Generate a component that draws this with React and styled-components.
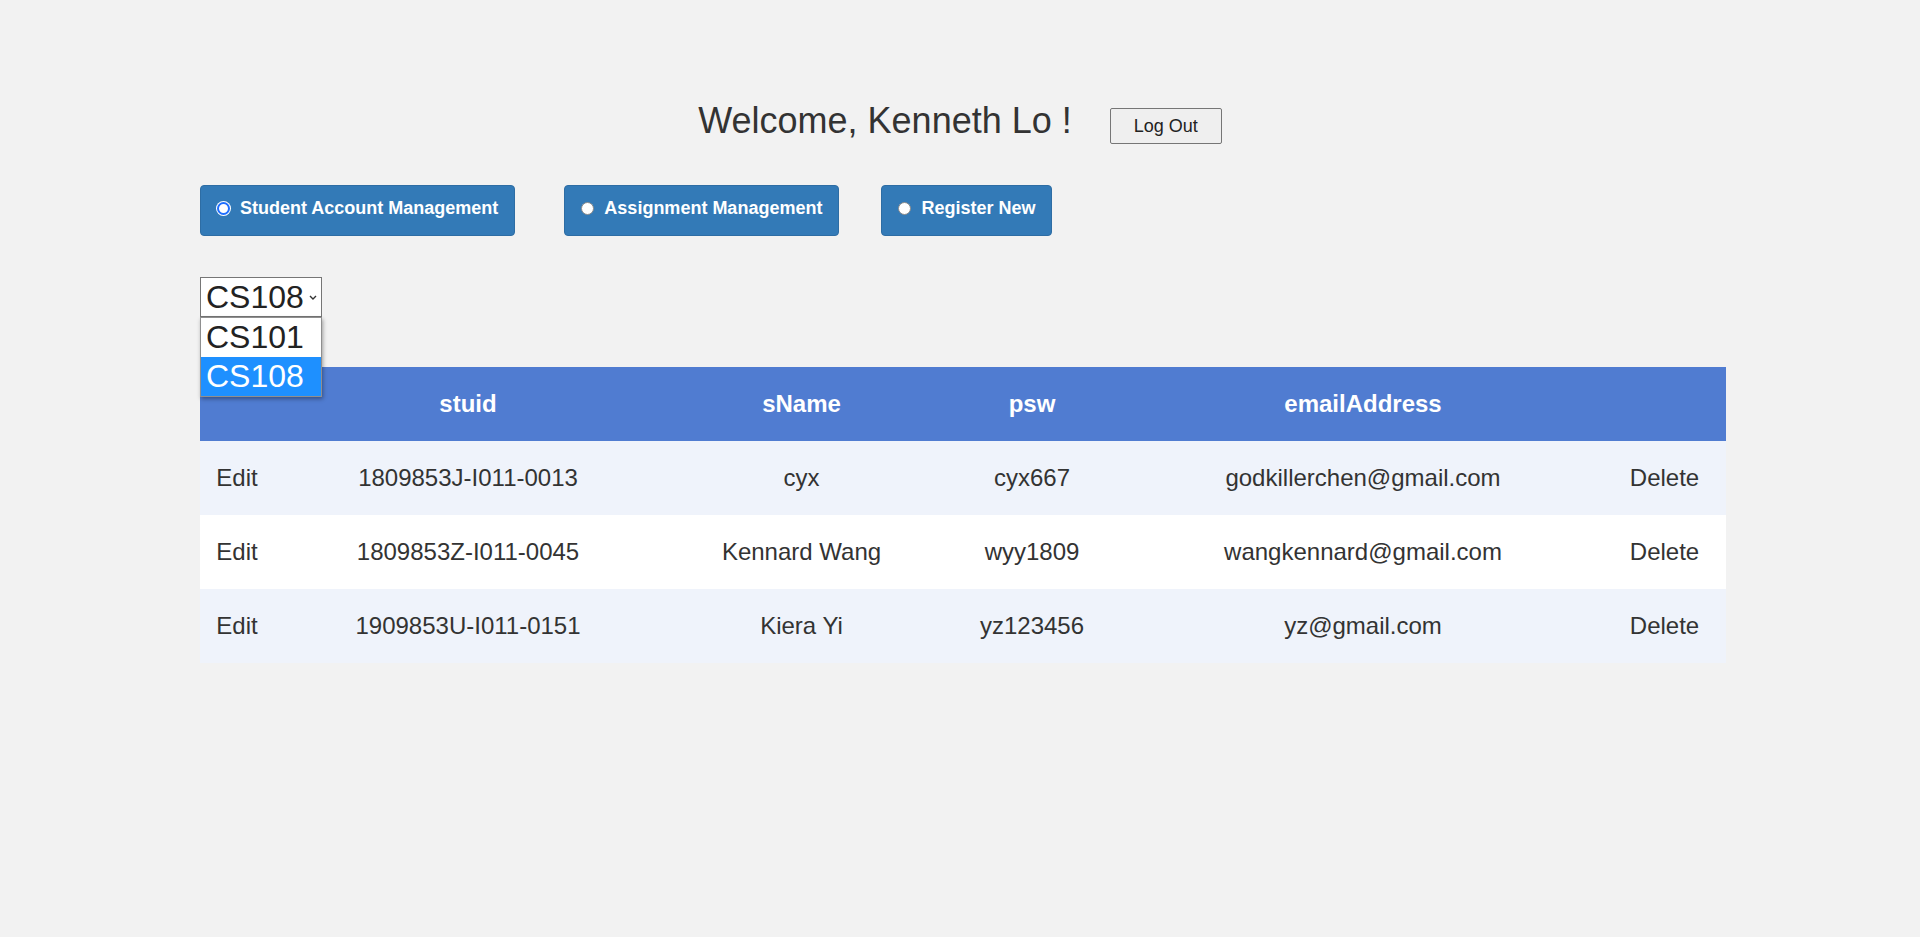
import React from "react";
import styled, { createGlobalStyle } from "styled-components";

const GlobalStyle = createGlobalStyle`
  html, body {
    margin: 0;
    padding: 0;
    background: #f2f2f2;
  }
  body {
    font-family: "Liberation Sans", Arial, sans-serif;
    color: #333333;
    min-height: 937px;
  }
`;

const Page = styled.div`
  width: 1920px;
`;

const HeaderRow = styled.div`
  display: flex;
  justify-content: center;
  align-items: flex-start;
  gap: 38px;
  padding-top: 100px;
  height: 85px;
`;

const Welcome = styled.h1`
  margin: 0;
  font-size: 36px;
  font-weight: normal;
  color: #333333;
  line-height: normal;
`;

const LogOutButton = styled.button`
  font-family: "Liberation Sans", Arial, sans-serif;
  font-size: 18px;
  color: #222222;
  background: #efefef;
  border: 1px solid #767676;
  border-radius: 2px;
  height: 36px;
  margin-top: 8px;
  padding: 0 23px;
  cursor: pointer;
`;

const Content = styled.div`
  padding-left: 200px;
`;

const NavRow = styled.div`
  display: flex;
  align-items: flex-start;
  height: 51px;
`;

const NavButton = styled.label`
  display: inline-flex;
  align-items: center;
  box-sizing: border-box;
  height: 51px;
  padding: 0 16px 5px 16px;
  margin-left: ${(p) => p.$offset || 0}px;
  background: #337ab7;
  border: 1px solid #2e6da4;
  border-radius: 4px;
  color: #ffffff;
  font-size: 18px;
  font-weight: bold;
  white-space: nowrap;
  cursor: pointer;
`;

const Radio = styled.span`
  box-sizing: border-box;
  width: 13px;
  height: 13px;
  margin-right: 10px;
  border-radius: 50%;
  flex: none;
  background: #ffffff;
  border: ${(p) => (p.$checked ? "2.5px solid #1f6fff" : "1px solid #8a8a8a")};
  box-shadow: ${(p) => (p.$checked ? "0 0 0 1px #ffffff" : "none")};
`;

const SelectWrap = styled.div`
  position: relative;
  width: 122px;
  margin-top: 41px;
`;

const SelectBox = styled.div`
  box-sizing: border-box;
  width: 122px;
  height: 40px;
  display: flex;
  align-items: center;
  justify-content: space-between;
  padding: 0 4px 0 5px;
  background: #ffffff;
  border: 1px solid #767676;
  font-size: 32px;
  line-height: 38px;
  color: #222222;
`;

const Chevron = styled.svg`
  width: 8px;
  height: 5px;
  margin-top: 1px;
`;

const DropList = styled.div`
  position: absolute;
  top: 40px;
  left: 0;
  box-sizing: border-box;
  width: 122px;
  background: #ffffff;
  border: 1px solid #8f8f8f;
  box-shadow: 1px 2px 4px rgba(0, 0, 0, 0.35);
  z-index: 5;
`;

const Option = styled.div`
  height: 39px;
  line-height: 38px;
  padding-left: 5px;
  font-size: 32px;
  background: ${(p) => (p.$active ? "#1e90ff" : "#ffffff")};
  color: ${(p) => (p.$active ? "#ffffff" : "#222222")};
`;

const Table = styled.table`
  margin-top: 50px;
  width: 1526px;
  table-layout: fixed;
  border-collapse: collapse;
  font-size: 24px;
`;

const Col = styled.col`
  width: ${(p) => p.$w}px;
`;

const HeadRow = styled.tr`
  height: 74px;
  background: #507cd1;
`;

const Th = styled.th`
  padding: 1px;
  color: #ffffff;
  font-weight: bold;
  text-align: center;
`;

const Row = styled.tr`
  height: 74px;
  background: ${(p) => (p.$alt ? "#ffffff" : "#eff3fb")};
`;

const Td = styled.td`
  padding: 1px;
  color: #333333;
  text-align: center;
  white-space: nowrap;
`;

const navItems = [
  { label: "Student Account Management", checked: true, offset: 0 },
  { label: "Assignment Management", checked: false, offset: 49 },
  { label: "Register New", checked: false, offset: 42 },
];

const cols = [74, 388, 279, 182, 480, 123];
const headers = ["", "stuid", "sName", "psw", "emailAddress", ""];

const students = [
  { id: "1809853J-I011-0013", name: "cyx", psw: "cyx667", email: "godkillerchen@gmail.com" },
  { id: "1809853Z-I011-0045", name: "Kennard Wang", psw: "wyy1809", email: "wangkennard@gmail.com" },
  { id: "1909853U-I011-0151", name: "Kiera Yi", psw: "yz123456", email: "yz@gmail.com" },
];

export default function App() {
  return (
    <Page>
      <GlobalStyle />
      <HeaderRow>
        <Welcome>Welcome, Kenneth Lo !</Welcome>
        <LogOutButton type="button">Log Out</LogOutButton>
      </HeaderRow>
      <Content>
        <NavRow>
          {navItems.map((item) => (
            <NavButton key={item.label} $offset={item.offset}>
              <Radio $checked={item.checked} />
              {item.label}
            </NavButton>
          ))}
        </NavRow>
        <SelectWrap>
          <SelectBox>
            <span>CS108</span>
            <Chevron viewBox="0 0 8 5">
              <path d="M1 1 L4 4 L7 1" fill="none" stroke="#333" strokeWidth="1.4" />
            </Chevron>
          </SelectBox>
          <DropList>
            <Option>CS101</Option>
            <Option $active>CS108</Option>
          </DropList>
        </SelectWrap>
        <Table>
          <colgroup>
            {cols.map((w, i) => (
              <Col key={i} $w={w} />
            ))}
          </colgroup>
          <thead>
            <HeadRow>
              {headers.map((h, i) => (
                <Th key={i}>{h}</Th>
              ))}
            </HeadRow>
          </thead>
          <tbody>
            {students.map((s, i) => (
              <Row key={s.id} $alt={i % 2 === 1}>
                <Td>Edit</Td>
                <Td>{s.id}</Td>
                <Td>{s.name}</Td>
                <Td>{s.psw}</Td>
                <Td>{s.email}</Td>
                <Td>Delete</Td>
              </Row>
            ))}
          </tbody>
        </Table>
      </Content>
    </Page>
  );
}
